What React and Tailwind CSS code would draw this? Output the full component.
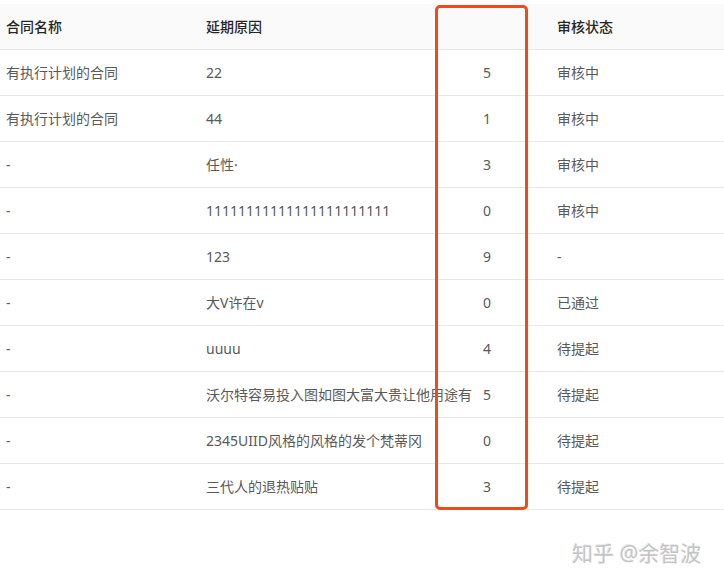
import React from 'react';

const rows = [
  { name: '有执行计划的合同', reason: '22', num: '5', status: '审核中' },
  { name: '有执行计划的合同', reason: '44', num: '1', status: '审核中' },
  { name: '-', reason: '任性·', num: '3', status: '审核中' },
  { name: '-', reason: '11111111111111111111111', num: '0', status: '审核中' },
  { name: '-', reason: '123', num: '9', status: '-' },
  { name: '-', reason: '大V许在v', num: '0', status: '已通过' },
  { name: '-', reason: 'uuuu', num: '4', status: '待提起' },
  { name: '-', reason: '沃尔特容易投入图如图大富大贵让他用途有', num: '5', status: '待提起' },
  { name: '-', reason: '2345UIID风格的风格的发个梵蒂冈', num: '0', status: '待提起' },
  { name: '-', reason: '三代人的退热贴贴', num: '3', status: '待提起' },
];

const App = () => {
  return (
    <div
      className="relative w-[724px] h-[585px] bg-white overflow-hidden pt-1"
      style={{ fontFamily: '"Noto Sans", "Noto Sans CJK SC", sans-serif' }}
    >
      <table className="w-full table-fixed border-collapse text-[14px]">
        <colgroup>
          <col className="w-[200px]" />
          <col className="w-[250px]" />
          <col className="w-[101px]" />
          <col />
        </colgroup>
        <thead>
          <tr className="bg-[#fafafa] border-b border-[#e8e8e8] h-[45px]">
            <th className="pl-[6px] text-left font-medium text-[#262626]">合同名称</th>
            <th className="pl-[6px] text-left font-medium text-[#262626]">延期原因</th>
            <th></th>
            <th className="pl-[6px] text-left font-medium text-[#262626]">审核状态</th>
          </tr>
        </thead>
        <tbody>
          {rows.map((r, i) => (
            <tr key={i} className="border-b border-[#e8e8e8] h-[46px] text-[#595959]">
              <td className="pl-[6px] whitespace-nowrap">{r.name}</td>
              <td className="pl-[6px] whitespace-nowrap">{r.reason}</td>
              <td className="pr-[60px] text-right">{r.num}</td>
              <td className="pl-[6px] whitespace-nowrap">{r.status}</td>
            </tr>
          ))}
        </tbody>
      </table>

      {/* red highlight box */}
      <div className="absolute left-[435px] top-[5px] w-[93px] h-[505px] border-[3px] border-[#ee4a1c] rounded-[5px]"></div>

      {/* watermark */}
      <div
        className="absolute left-[572px] top-[538px] text-[21px] text-[#c4c4c4]"
        style={{ textShadow: '1px 1px 0 #ffffff, -1px -1px 0 #9a9a9a33' }}
      >
        知乎 @余智波
      </div>
    </div>
  );
};

export default App;
